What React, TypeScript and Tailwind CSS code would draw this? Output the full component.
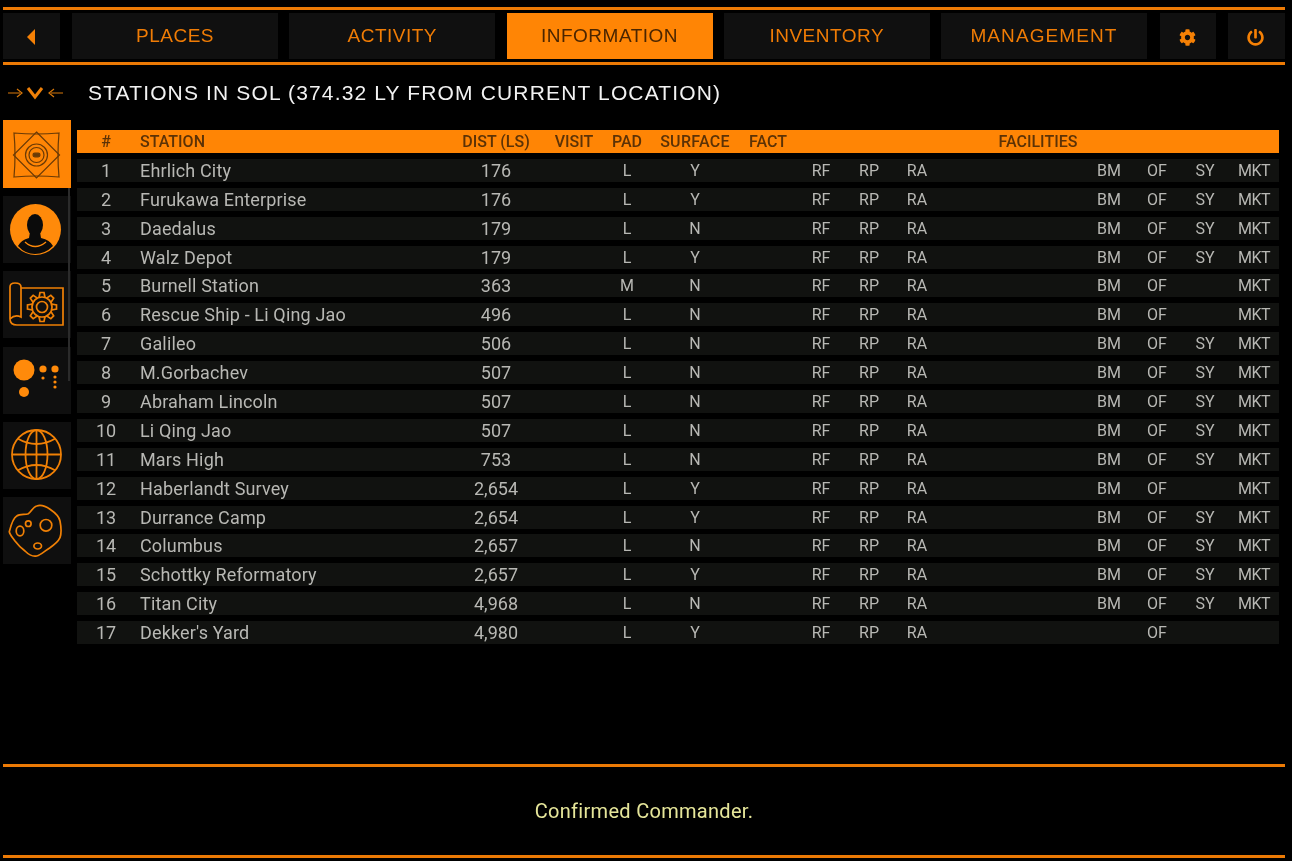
import { FaCog, FaPowerOff } from "react-icons/fa";

const ROW =
  "grid h-[23px] grid-cols-[58px_313px_96px_60px_46px_90px_57px_48px_48px_48px_48px_48px_48px_48px_48px_48px_50px] items-center font-['Roboto',sans-serif] text-[16px] leading-[23px]";

interface Station {
  name: string;
  dist: string;
  pad: string;
  surface: string;
  bm?: boolean;
  sy?: boolean;
}

const STATIONS: Station[] = [
  { name: "Ehrlich City", dist: "176", pad: "L", surface: "Y", bm: true, sy: true },
  { name: "Furukawa Enterprise", dist: "176", pad: "L", surface: "Y", bm: true, sy: true },
  { name: "Daedalus", dist: "179", pad: "L", surface: "N", bm: true, sy: true },
  { name: "Walz Depot", dist: "179", pad: "L", surface: "Y", bm: true, sy: true },
  { name: "Burnell Station", dist: "363", pad: "M", surface: "N", bm: true },
  { name: "Rescue Ship - Li Qing Jao", dist: "496", pad: "L", surface: "N", bm: true },
  { name: "Galileo", dist: "506", pad: "L", surface: "N", bm: true, sy: true },
  { name: "M.Gorbachev", dist: "507", pad: "L", surface: "N", bm: true, sy: true },
  { name: "Abraham Lincoln", dist: "507", pad: "L", surface: "N", bm: true, sy: true },
  { name: "Li Qing Jao", dist: "507", pad: "L", surface: "N", bm: true, sy: true },
  { name: "Mars High", dist: "753", pad: "L", surface: "N", bm: true, sy: true },
  { name: "Haberlandt Survey", dist: "2,654", pad: "L", surface: "Y", bm: true },
  { name: "Durrance Camp", dist: "2,654", pad: "L", surface: "Y", bm: true, sy: true },
  { name: "Columbus", dist: "2,657", pad: "L", surface: "N", bm: true, sy: true },
  { name: "Schottky Reformatory", dist: "2,657", pad: "L", surface: "Y", bm: true, sy: true },
  { name: "Titan City", dist: "4,968", pad: "L", surface: "N", bm: true, sy: true },
  { name: "Dekker's Yard", dist: "4,980", pad: "L", surface: "Y" },
];

function NavTab({ label, active, wide }: { label: string; active?: boolean; wide?: boolean }) {
  return (
    <div
      className={`flex h-[46px] w-[206px] items-center justify-center pt-[1px] font-['Liberation_Sans',sans-serif] text-[19px] ${
        wide ? "tracking-[1.1px]" : "tracking-[0.5px]"
      } ${active ? "bg-[#ff8505] text-[#4a2500]" : "bg-[#101010] text-[#f07c05]"}`}
    >
      {label}
    </div>
  );
}

function Tile({ active, children }: { active?: boolean; children: React.ReactNode }) {
  return (
    <div className={`w-[68px] overflow-hidden ${active ? "h-[68px] bg-[#ff8505]" : "h-[67px] bg-[#0f0f0f]"}`}>
      <svg viewBox="0 0 68 68" width={68} height={68} fill="none">
        {children}
      </svg>
    </div>
  );
}

const GEAR_TEETH = [0, 45, 90, 135, 180, 225, 270, 315];

function SideIcons() {
  return (
    <div className="relative flex w-[68px] flex-col gap-[8.2px]">
      <Tile active>
        <g stroke="#6a3a06" strokeWidth={1.2}>
          <path d="M11 13 Q33.5 15 56 13 Q54 35 56 57 Q33.5 55 11 57 Q13 35 11 13Z" />
          <path d="M33.5 12 L56.5 35 L33.5 58 L10.5 35Z" />
          <circle cx={33.5} cy={35} r={11} />
          <circle cx={33.5} cy={35} r={7.5} />
          <rect x={30} y={33.2} width={7} height={3.6} rx={1.8} fill="#6a3a06" />
        </g>
      </Tile>
      <Tile>
        <circle cx={32.5} cy={33.5} r={25.5} fill="#ff8a0a" />
        <ellipse cx={32} cy={29} rx={8} ry={11} fill="#0b0b0b" />
        <path d="M27 36 L37 36 L38 42 Q47 44 50 50 Q42 58 32 58 Q22 58 15 50 Q18 44 26 42Z" fill="#0b0b0b" />
        <path d="M22 46 Q32 55 43 46" stroke="#ff8a0a" strokeWidth={1.4} />
      </Tile>
      <Tile>
        <g stroke="#f08005" strokeWidth={1.7}>
          <path d="M18 17 H60 V54 H14 Q7 54 7 48 V16 Q7 12 12 12 Q18 12 18 16 V46 Q12 43 7 48" />
          <circle cx={39} cy={36} r={5.5} />
          <circle cx={39} cy={36} r={10} />
          {GEAR_TEETH.map((a) => (
            <path key={a} d="M36 26.5 L37 21.5 H41 L42 26.5" transform={`rotate(${a} 39 36)`} />
          ))}
        </g>
      </Tile>
      <Tile>
        <g fill="#ff8a0a">
          <circle cx={21} cy={23} r={10.5} />
          <circle cx={21} cy={45} r={5} />
          <circle cx={40} cy={22} r={3.6} />
          <circle cx={52} cy={22} r={3.6} />
          <circle cx={40} cy={31} r={1.6} />
          <circle cx={52} cy={30} r={1.6} />
          <circle cx={52} cy={35} r={1.6} />
          <circle cx={52} cy={40} r={1.6} />
        </g>
      </Tile>
      <Tile>
        <g stroke="#f08005" strokeWidth={1.8}>
          <circle cx={33.5} cy={32.5} r={24.5} />
          <ellipse cx={33.5} cy={32.5} rx={11} ry={24.5} />
          <path d="M33.5 8 V57 M9 32.5 H58" />
          <path d="M14.5 16.5 Q33.5 27.5 52.5 16.5 M14.5 48.5 Q33.5 37.5 52.5 48.5" />
        </g>
      </Tile>
      <Tile>
        <g stroke="#f08005" strokeWidth={1.7}>
          <path d="M6.3 34.7 C8 28 10 21 13.7 19 C17 16.5 22 18 25.3 16.7 C28 15 30 10 33.7 9 C38 7.5 43 9.5 47 12.3 C51 15 56 19 57 24 C58 29 59 35 57 40.7 C55 45 51 48 47 50.7 C43 53 38 58 33.7 59 C29 60 25 57 22 54 C18 51 15 48 12 44 C10 41 7 38 6.3 34.7Z" />
          <ellipse cx={17} cy={34} rx={3.8} ry={4.8} />
          <circle cx={25.3} cy={26.7} r={2.8} />
          <circle cx={43} cy={28.3} r={5.8} />
          <ellipse cx={34.7} cy={49} rx={3.8} ry={3} />
        </g>
      </Tile>
      <div className="absolute left-[65px] top-[68px] h-[193px] w-[2px] bg-[#2b2b2b]" />
    </div>
  );
}

function HeaderRow() {
  return (
    <div className={`${ROW} bg-[#ff8505] font-medium text-[#5c3206]`}>
      <span className="text-center">#</span>
      <span className="pl-[5px]">STATION</span>
      <span className="text-center">DIST (LS)</span>
      <span className="text-center">VISIT</span>
      <span className="text-center">PAD</span>
      <span className="text-center tracking-[0.3px]">SURFACE</span>
      <span className="pl-[9px]">FACT</span>
      <span className="col-span-10 text-center">FACILITIES</span>
    </div>
  );
}

function StationRow({ index, s }: { index: number; s: Station }) {
  return (
    <div className={`${ROW} bg-[#111210] text-[#b8b8b4]`}>
      <span className="text-center text-[18px]">{index}</span>
      <span className="pl-[5px] text-[18px] tracking-[0.15px] whitespace-nowrap">{s.name}</span>
      <span className="text-center text-[18px]">{s.dist}</span>
      <span />
      <span className="text-center">{s.pad}</span>
      <span className="text-center">{s.surface}</span>
      <span />
      <span className="text-center">RF</span>
      <span className="text-center">RP</span>
      <span className="text-center">RA</span>
      <span />
      <span />
      <span />
      <span className="text-center">{s.bm ? "BM" : ""}</span>
      <span className="text-center">OF</span>
      <span className="text-center">{s.sy ? "SY" : ""}</span>
      <span className="text-center tracking-[-0.6px]">{s.bm ? "MKT" : ""}</span>
    </div>
  );
}

export default function App() {
  return (
    <div className="flex h-[861px] w-[1292px] flex-col overflow-hidden bg-black pl-[3px] pr-[7px] pt-[7px] blur-[0.5px]">
      {/* top nav */}
      <div className="h-[3px] bg-[#ec7a05]" />
      <div className="mt-[3px] flex h-[46px] items-center">
        <div className="flex h-[46px] w-[57px] items-center justify-center bg-[#101010] pr-[2px] pt-[1px]">
          <svg width={8} height={16} viewBox="0 0 8 16">
            <path d="M8 0 V16 L0 8Z" fill="#f58005" />
          </svg>
        </div>
        <div className="ml-[12px] flex gap-[11.25px]">
          <NavTab label="PLACES" />
          <NavTab label="ACTIVITY" />
          <NavTab label="INFORMATION" active />
          <NavTab label="INVENTORY" />
          <NavTab label="MANAGEMENT" wide />
        </div>
        <div className="ml-[13px] flex h-[46px] w-[56px] items-center justify-center bg-[#101010] pr-[2px] pt-[2px] text-[#f58005]">
          <FaCog size={17} />
        </div>
        <div className="ml-[12px] flex h-[46px] w-[57px] items-center justify-center bg-[#101010] pr-[2px] pt-[2px] text-[#f58005]">
          <FaPowerOff size={17} />
        </div>
      </div>
      <div className="mt-[3px] h-[3px] bg-[#ec7a05]" />

      {/* title */}
      <div className="flex h-[55px] items-center">
        <svg width={58} height={16} viewBox="0 0 58 16" className="ml-[4px]" fill="none">
          <path d="M1 8 H13 M10 4 L15 8 L10 12" stroke="#d8780a" strokeWidth={1.2} />
          <path d="M21 3 L28 12 L35 3" stroke="#ef8008" strokeWidth={3} />
          <path d="M56 8 H44 M47 4 L42 8 L47 12" stroke="#d8780a" strokeWidth={1.2} />
        </svg>
        <h1 className="ml-[23px] font-['Liberation_Sans',sans-serif] text-[21px] font-normal tracking-[1.15px] whitespace-nowrap text-[#f2f2f2]">
          STATIONS IN SOL (374.32 LY FROM CURRENT LOCATION)
        </h1>
      </div>

      <div className="flex h-[644px] items-start">
        <SideIcons />
        <div className="ml-[6px] mt-[10px] flex flex-col gap-[5.9px]">
          <HeaderRow />
          <div className="flex flex-col gap-[5.9px]">
            {STATIONS.map((s, i) => (
              <StationRow key={s.name} index={i + 1} s={s} />
            ))}
          </div>
        </div>
      </div>

      {/* status */}
      <div className="h-[3px] bg-[#ec7a05]" />
      <div className="flex h-[88px] items-center justify-center font-['Roboto',sans-serif] text-[20px] tracking-[0.3px] text-[#e6e69a]">
        Confirmed Commander.
      </div>
      <div className="h-[3px] bg-[#ec7a05]" />
    </div>
  );
}
